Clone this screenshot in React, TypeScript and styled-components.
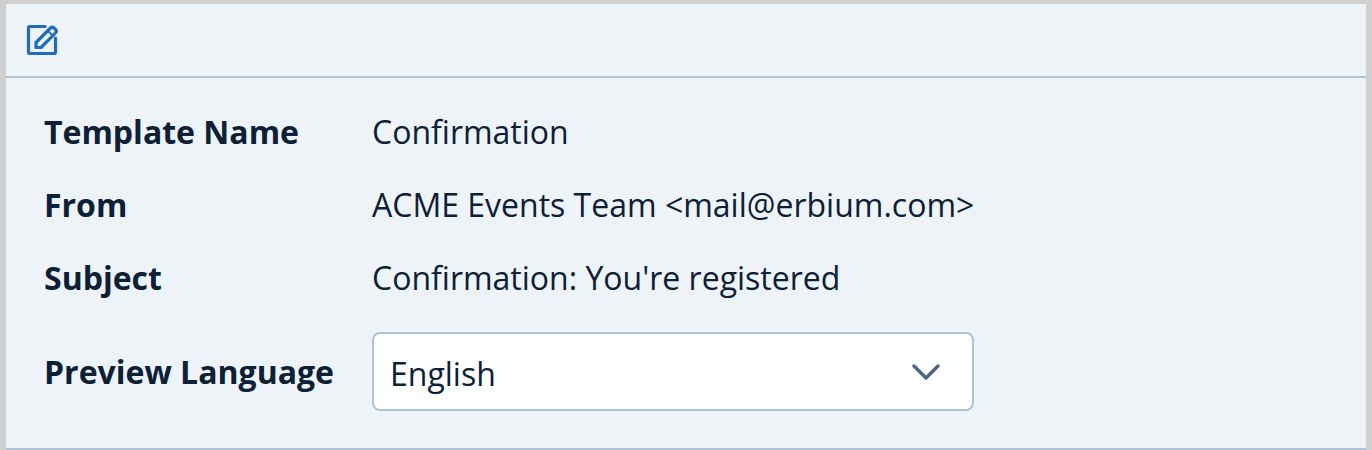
import React from "react";
import styled, { createGlobalStyle } from "styled-components";

const Global = createGlobalStyle`
  html, body { margin: 0; padding: 0; background: #cfcfcf; }
  body { font-family: "Open Sans", "Noto Sans", sans-serif; color: #0c2036; }
`;

const Frame = styled.div`
  box-sizing: border-box;
  width: 1372px;
  height: 450px;
  padding: 4px 6px 0;
  background: #cfcfcf;
`;

const Panel = styled.section`
  box-sizing: border-box;
  height: 446px;
  background: #eef3f8;
  border-bottom: 2px solid #b0c2d7;
`;

const Toolbar = styled.div`
  box-sizing: border-box;
  height: 74px;
  display: flex;
  align-items: center;
  padding: 0 0 0 20px;
  border-bottom: 2px solid #b0c2d7;
`;

const IconButton = styled.button`
  display: flex;
  padding: 0;
  border: 0;
  background: none;
  color: #1f6db8;
`;

const Fields = styled.dl`
  margin: 0;
  padding: 17px 0 0 38px;
  display: grid;
  grid-template-columns: 328px 602px;
  grid-template-rows: 73px 73px 73px 115px;
  align-items: center;
  font-size: 32px;
  line-height: 40px;
  white-space: nowrap;
`;

const Label = styled.dt`
  font-weight: 700;
`;

const Value = styled.dd`
  margin: 0;
`;

const Select = styled.div`
  box-sizing: border-box;
  height: 79px;
  display: flex;
  align-items: center;
  justify-content: space-between;
  padding: 4px 32px 0 16px;
  background: #fff;
  border: 2px solid #b0c2d7;
  border-radius: 8px;
`;

const Chevron = styled.svg`
  display: block;
  margin-top: -4px;
  color: #4b6584;
`;

const rows: [string, string][] = [
  ["Template Name", "Confirmation"],
  ["From", "ACME Events Team <mail@erbium.com>"],
  ["Subject", "Confirmation: You're registered"],
];

export default function App() {
  return (
    <Frame>
      <Global />
      <Panel>
        <Toolbar>
          <IconButton aria-label="Edit">
            <svg width="33" height="33" viewBox="26 24 33 33" fill="none" stroke="currentColor" strokeWidth="3.2" strokeLinejoin="round" strokeLinecap="round">
              <path d="M45 26.5H30a1.5 1.5 0 0 0-1.5 1.5V52a1.5 1.5 0 0 0 1.5 1.5H54a1.5 1.5 0 0 0 1.5-1.5V38" />
              <path d="M36 47.5V42.5L50.5 28a2.5 2.5 0 0 1 3.5 0L55.5 29.5a2.5 2.5 0 0 1 0 3.5L41 47.5Z" />
              <path d="M48 31l4.5 4.5" strokeWidth="2" />
            </svg>
          </IconButton>
        </Toolbar>
        <Fields>
          {rows.map(([k, v]) => (
            <React.Fragment key={k}>
              <Label>{k}</Label>
              <Value>{v}</Value>
            </React.Fragment>
          ))}
          <Label>Preview Language</Label>
          <Value>
            <Select>
              <span>English</span>
              <Chevron width="28" height="16" viewBox="0 0 28 16" fill="none" stroke="currentColor" strokeWidth="3.4" strokeLinecap="round" strokeLinejoin="round">
                <path d="M2 2l12 12L26 2" />
              </Chevron>
            </Select>
          </Value>
        </Fields>
      </Panel>
    </Frame>
  );
}
